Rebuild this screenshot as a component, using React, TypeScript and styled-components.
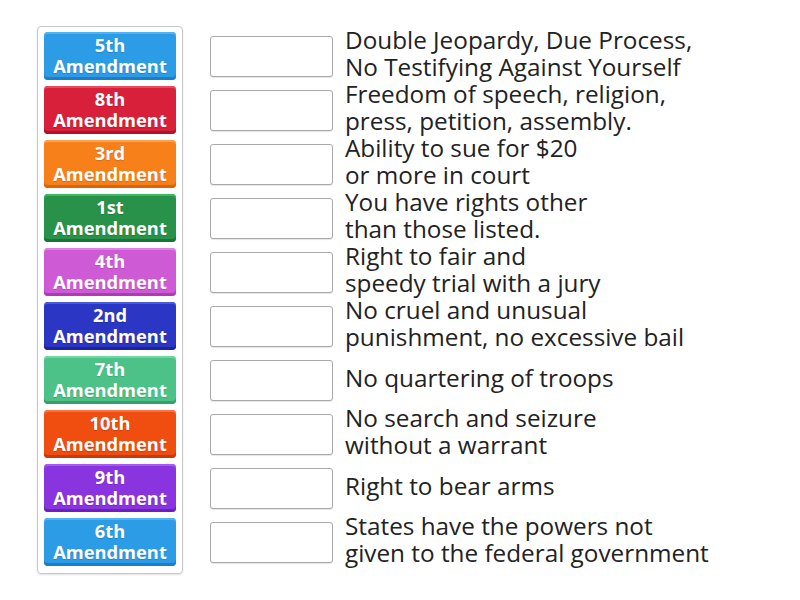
import React from "react";
import styled, { createGlobalStyle } from "styled-components";

const Global = createGlobalStyle`
  html, body { margin: 0; padding: 0; background: #ffffff; }
  body { font-family: "Open Sans", "DejaVu Sans", sans-serif; }
`;

const Page = styled.div`
  width: 800px;
  height: 600px;
  display: flex;
  align-items: flex-start;
  padding: 26px 0 0 37px;
  box-sizing: border-box;
  background: #fff;
`;

const TilePanel = styled.div`
  width: 146px;
  box-sizing: border-box;
  border: 1px solid #c8c8c8;
  border-radius: 4px;
  padding: 5px 6px 7px 6px;
  display: flex;
  flex-direction: column;
  gap: 6px;
  box-shadow: 0 1px 2px rgba(0, 0, 0, 0.12);
`;

const Tile = styled.div<{ $bg: string; $light: string; $dark: string }>`
  height: 48px;
  border-radius: 4px;
  background: ${(p) => p.$bg};
  box-shadow: inset 0 2px 0 ${(p) => p.$light}, inset 0 -3px 0 ${(p) => p.$dark};
  color: #fff;
  font-weight: 700;
  font-size: 18.3px;
  line-height: 21px;
  text-align: center;
  display: flex;
  flex-direction: column;
  justify-content: center;
  padding-bottom: 2px;
  box-sizing: border-box;
  text-shadow: 0 1px 1px rgba(0, 0, 0, 0.15);
  white-space: nowrap;
`;

const Rows = styled.div`
  margin-left: 27px;
  margin-top: 6px;
  display: flex;
  flex-direction: column;
  gap: 6px;
`;

const Row = styled.div`
  height: 48px;
  display: flex;
  align-items: center;
`;

const Slot = styled.div`
  width: 123px;
  height: 41px;
  box-sizing: border-box;
  border: 1px solid #a9a9a9;
  border-radius: 3px;
  background: #fff;
  box-shadow: 0 1px 1px rgba(0, 0, 0, 0.1);
  flex-shrink: 0;
`;

const Clue = styled.div`
  margin-left: 12px;
  margin-bottom: 6px;
  font-size: 24.3px;
  line-height: 27px;
  color: #222222;
  white-space: pre;
`;

const tiles = [
  { n: "5th", bg: "#2c9ce6", light: "#4fb3f2", dark: "#1a7fc8" },
  { n: "8th", bg: "#d8203b", light: "#e84a5f", dark: "#b01228" },
  { n: "3rd", bg: "#f7801a", light: "#ffa04a", dark: "#d8650a" },
  { n: "1st", bg: "#28924a", light: "#3fb866", dark: "#1b7338" },
  { n: "4th", bg: "#cf5ad6", light: "#df82e4", dark: "#ad3bb5" },
  { n: "2nd", bg: "#2b36c4", light: "#4a5ad8", dark: "#1c249c" },
  { n: "7th", bg: "#4cc288", light: "#70d7a2", dark: "#36a06c" },
  { n: "10th", bg: "#f04d10", light: "#ff7240", dark: "#c93a06" },
  { n: "9th", bg: "#8a34df", light: "#a45cf0", dark: "#6d1fbd" },
  { n: "6th", bg: "#2c9ce6", light: "#4fb3f2", dark: "#1a7fc8" },
];

const clues = [
  "Double Jeopardy, Due Process,\nNo Testifying Against Yourself",
  "Freedom of speech, religion,\npress, petition, assembly.",
  "Ability to sue for $20\nor more in court",
  "You have rights other\nthan those listed.",
  "Right to fair and\nspeedy trial with a jury",
  "No cruel and unusual\npunishment, no excessive bail",
  "No quartering of troops",
  "No search and seizure\nwithout a warrant",
  "Right to bear arms",
  "States have the powers not\ngiven to the federal government",
];

export default function App() {
  return (
    <>
      <Global />
      <Page>
        <TilePanel>
          {tiles.map((t) => (
            <Tile key={t.n} $bg={t.bg} $light={t.light} $dark={t.dark}>
              <span>{t.n}</span>
              <span>Amendment</span>
            </Tile>
          ))}
        </TilePanel>
        <Rows>
          {clues.map((c, i) => (
            <Row key={i}>
              <Slot />
              <Clue>{c}</Clue>
            </Row>
          ))}
        </Rows>
      </Page>
    </>
  );
}
